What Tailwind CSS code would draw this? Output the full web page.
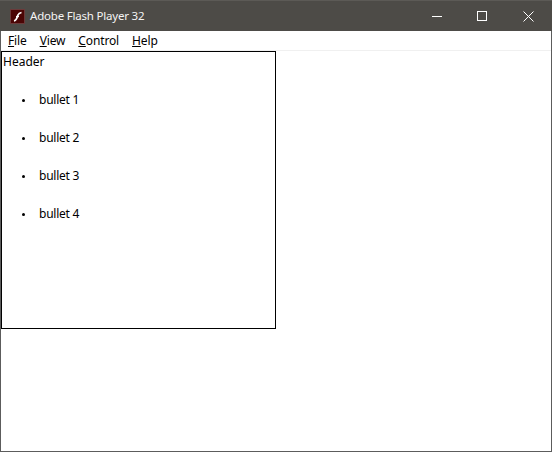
<!DOCTYPE html>
<html lang="en">
  <head>
    <meta charset="UTF-8" />
    <title>Adobe Flash Player 32</title>
    <script src="https://cdn.jsdelivr.net/npm/@tailwindcss/browser@4"></script>
  </head>
  <body class="bg-white overflow-hidden">
    <div class="w-[552px] h-[452px] flex flex-col border border-t-0 border-[#5c5c5c] font-['Noto_Sans',sans-serif] text-black">
      <!-- title bar -->
      <div class="h-[31px] -mx-px bg-[#4d4b47] border-t border-[#5c5a56] flex items-center text-white shrink-0">
        <div class="ml-[10px] w-[15px] h-[15px] bg-[#4b0505] border border-[#6b3a3a] flex items-center justify-center">
          <svg width="11" height="11" viewBox="0 0 11 11" fill="none">
            <path d="M2 10C5 9.5 5 6 6 4C6.5 2.8 7.5 1.8 9.5 1.5" stroke="#fff" stroke-width="1.7" />
            <path d="M4 5.6H7" stroke="#fff" stroke-width="1.2" />
          </svg>
        </div>
        <span class="ml-[5px] text-[11.5px] tracking-[-0.2px] text-[#f4f4f4]">Adobe Flash Player 32</span>
        <div class="ml-auto flex items-center pr-[1px]">
          <div class="w-[46px] pl-[2px] flex justify-center">
            <svg width="10" height="10" viewBox="0 0 10 10"><path d="M0 5.5H10" stroke="#fff" /></svg>
          </div>
          <div class="w-[46px] flex justify-center">
            <svg width="10" height="10" viewBox="0 0 10 10"><rect x="0.5" y="0.5" width="9" height="9" fill="none" stroke="#fff" /></svg>
          </div>
          <div class="w-[46px] flex justify-center">
            <svg width="11" height="11" viewBox="0 0 11 11"><path d="M0.5 0.5L10.5 10.5M10.5 0.5L0.5 10.5" stroke="#fff" /></svg>
          </div>
        </div>
      </div>
      <!-- menu bar -->
      <div class="h-[20px] flex items-center gap-[13px] pl-[7px] text-[12px] tracking-[-0.14px] border-b border-[#f0f0f0] shrink-0">
        <span><u>F</u>ile</span>
        <span><u>V</u>iew</span>
        <span><u>C</u>ontrol</span>
        <span><u>H</u>elp</span>
      </div>
      <!-- stage -->
      <div class="w-[275px] h-[278px] border border-black pl-[1px] text-[12px] shrink-0">
        <p class="mt-[1px] leading-[17px]">Header</p>
        <ul class="mt-[21px] flex flex-col gap-[21px] tracking-[-0.25px]">
          <li class="flex items-center h-[17px] pl-[19px]"><span class="w-[3px] h-[3px] mt-[1px] rounded-full bg-black mr-[14px]"></span>bullet 1</li>
          <li class="flex items-center h-[17px] pl-[19px]"><span class="w-[3px] h-[3px] mt-[1px] rounded-full bg-black mr-[14px]"></span>bullet 2</li>
          <li class="flex items-center h-[17px] pl-[19px]"><span class="w-[3px] h-[3px] mt-[1px] rounded-full bg-black mr-[14px]"></span>bullet 3</li>
          <li class="flex items-center h-[17px] pl-[19px]"><span class="w-[3px] h-[3px] mt-[1px] rounded-full bg-black mr-[14px]"></span>bullet 4</li>
        </ul>
      </div>
    </div>
  </body>
</html>
